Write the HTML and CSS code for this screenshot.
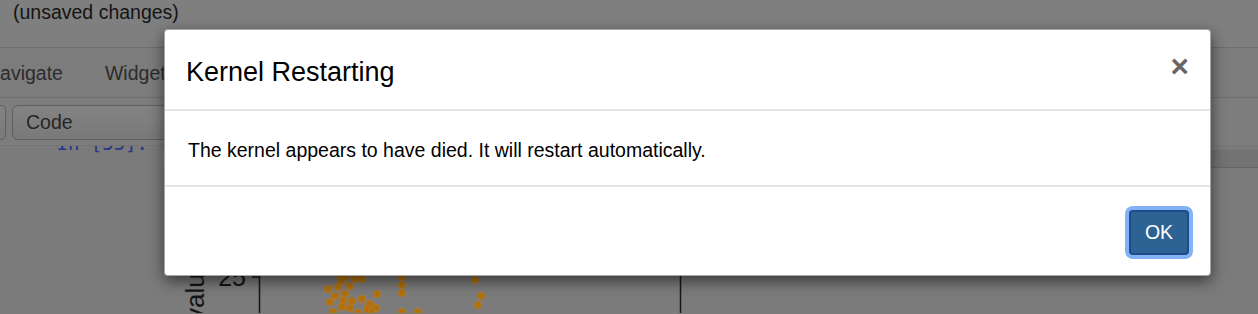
FILE: index.html
```html
<!DOCTYPE html>
<html>
<head>
<meta charset="utf-8">
<link rel="stylesheet" href="styles.css">
</head>
<body>
<div class="page">
  <div class="site-header">
    <span class="save-status">(unsaved changes)</span>
  </div>
  <div class="menubar">
    <span class="menu-item menu-first">Navigate</span>
    <span class="menu-item">Widgets</span>
    <span class="menu-item">Help</span>
  </div>
  <div class="toolbar">
    <span class="tool-btn"></span>
    <span class="cell-type">Code</span>
  </div>
  <div class="notebook">
    <div class="cell">
      <div class="prompt">In&nbsp;[55]:</div>
      <div class="input-area"></div>
    </div>
    <svg class="plot" width="1258" height="145" viewBox="0 0 1258 145" xmlns="http://www.w3.org/2000/svg">
      <g font-family="Liberation Sans, Arial, sans-serif" font-size="26" fill="#141414">
        <text transform="translate(204,153) rotate(-90)">value</text>
        <text x="246" y="118" text-anchor="end" font-size="25">25</text>
      </g>
      <g stroke="#161616" stroke-width="1.5">
        <line x1="259.5" y1="80" x2="259.5" y2="145"/>
        <line x1="252" y1="109" x2="259" y2="109"/>
        <line x1="680.5" y1="80" x2="680.5" y2="145"/>
      </g>
      <g fill="#b0700e" stroke="#b98032" stroke-width="0.6">
        <circle cx="340" cy="108" r="3.8"/>
        <circle cx="346" cy="109" r="3.8"/>
        <circle cx="328" cy="121" r="3.8"/>
        <circle cx="338" cy="119" r="3.8"/>
        <circle cx="341" cy="113" r="3.8"/>
        <circle cx="350" cy="118" r="3.8"/>
        <circle cx="355" cy="111" r="3.8"/>
        <circle cx="362" cy="111" r="3.8"/>
        <circle cx="335" cy="128" r="3.8"/>
        <circle cx="345" cy="126" r="3.8"/>
        <circle cx="343" cy="133" r="3.8"/>
        <circle cx="352" cy="133" r="3.8"/>
        <circle cx="362" cy="131" r="3.8"/>
        <circle cx="370" cy="136" r="3.8"/>
        <circle cx="377" cy="126" r="3.8"/>
        <circle cx="330" cy="134" r="3.8"/>
        <circle cx="342" cy="139" r="3.8"/>
        <circle cx="350" cy="140" r="3.8"/>
        <circle cx="367" cy="141" r="3.8"/>
        <circle cx="376" cy="140" r="3.8"/>
        <circle cx="372" cy="143" r="3.8"/>
        <circle cx="333" cy="144" r="3.8"/>
        <circle cx="358" cy="145" r="3.8"/>
        <circle cx="402" cy="109" r="3.8"/>
        <circle cx="402" cy="117" r="3.8"/>
        <circle cx="402" cy="125" r="3.8"/>
        <circle cx="475" cy="112" r="3.8"/>
        <circle cx="481" cy="128" r="3.8"/>
        <circle cx="478" cy="137" r="3.8"/>
        <circle cx="402" cy="144" r="3.8"/>
        <circle cx="418" cy="144" r="3.8"/>
      </g>
    </svg>
  </div>

  <div class="modal">
    <div class="modal-header">
      <h4 class="modal-title">Kernel Restarting</h4>
      <button class="close" type="button">×</button>
    </div>
    <div class="modal-body">The kernel appears to have died. It will restart automatically.</div>
    <div class="modal-footer">
      <button class="btn-ok" type="button">OK</button>
    </div>
  </div>
</div>
</body>
</html>
```

FILE: styles.css
```css
html, body {
  margin: 0;
  padding: 0;
}
body {
  width: 1258px;
  height: 314px;
  overflow: hidden;
  background: #7b7b7b;
  font-family: "Liberation Sans", Arial, sans-serif;
}
.page {
  position: relative;
  width: 1258px;
  height: 314px;
  overflow: hidden;
}
.site-header {
  height: 47px;
  background: #7f7f7f;
  border-bottom: 1px solid #6e6e6e;
  padding-left: 13px;
  box-sizing: content-box;
}
.save-status {
  display: block;
  font-size: 19.5px;
  line-height: 24px;
  color: #141414;
}
.menubar {
  height: 36px;
  padding-top: 13px;
  background: #7c7c7c;
  border-bottom: 1px solid #6e6e6e;
  display: flex;
  gap: 42px;
  white-space: nowrap;
}
.menu-item {
  font-size: 19.5px;
  line-height: 24px;
  color: #2c2c2c;
}
.menu-first {
  margin-left: -14px;
}
.toolbar {
  height: 48px;
  background: #7d7d7d;
  display: flex;
  align-items: flex-start;
  gap: 6px;
  padding-top: 7px;
  box-sizing: border-box;
  border-bottom: 1px solid #757575;
}
.tool-btn {
  display: block;
  width: 40px;
  height: 35px;
  margin-left: -34px;
  box-sizing: border-box;
  border: 1px solid #5f5f5f;
  border-radius: 5px;
  background: linear-gradient(#838383, #7a7a7a);
}
.cell-type {
  display: block;
  width: 300px;
  height: 35px;
  box-sizing: border-box;
  border: 1px solid #5f5f5f;
  border-radius: 6px;
  background: linear-gradient(#838383, #797979);
  font-size: 19.5px;
  line-height: 33px;
  padding-left: 13px;
  color: #262626;
}
.notebook {
  height: 168px;
  overflow: hidden;
  background: #7b7b7b;
}
.cell {
  display: flex;
  height: 22px;
  align-items: flex-start;
  overflow: hidden;
}
.prompt {
  width: 148px;
  flex: none;
  margin-top: -13px;
  text-align: right;
  font-family: "DejaVu Sans Mono", "Liberation Mono", monospace;
  font-size: 19px;
  line-height: 20px;
  color: #283689;
}
.input-area {
  margin-left: 15px;
  margin-top: 4px;
  flex: 1;
  height: 17px;
  background: #737373;
  border-left: 1px solid #8a8a8a;
  border-bottom: 1px solid #666;
}
.plot {
  display: block;
}

/* Modal */
.modal {
  position: absolute;
  left: 164px;
  top: 29px;
  width: 1047px;
  box-sizing: border-box;
  background: #fff;
  border: 1px solid rgba(0, 0, 0, 0.35);
  border-radius: 4px;
  box-shadow: 0 5px 15px rgba(0, 0, 0, 0.55);
}
.modal-header {
  display: flex;
  align-items: flex-start;
  padding: 23px 21px 18px 21px;
  border-bottom: 2px solid #e5e5e5;
}
.modal-title {
  margin: 0;
  font-size: 27px;
  line-height: 38px;
  font-weight: normal;
  color: #000;
  flex: 1;
}
.close {
  margin: -2px 0 0 0;
  padding: 0;
  border: 0;
  background: none;
  font-family: "Liberation Sans", Arial, sans-serif;
  font-size: 31.5px;
  font-weight: bold;
  line-height: 1;
  color: #666;
}
.modal-body {
  padding: 25px 23px 21px 23px;
  font-size: 19.5px;
  line-height: 28px;
  color: #000;
  border-bottom: 2px solid #e5e5e5;
}
.modal-footer {
  display: flex;
  justify-content: flex-end;
  padding: 23px 21px 20px 21px;
}
.btn-ok {
  width: 60px;
  height: 45px;
  margin: 0;
  padding: 0;
  box-sizing: border-box;
  background: #2c6294;
  border: 2px solid #1d4c88;
  border-radius: 4px;
  box-shadow: 0 0 0 4px #80b2f5;
  color: #fff;
  font-family: "Liberation Sans", Arial, sans-serif;
  font-size: 19.5px;
  line-height: 41px;
}
```
